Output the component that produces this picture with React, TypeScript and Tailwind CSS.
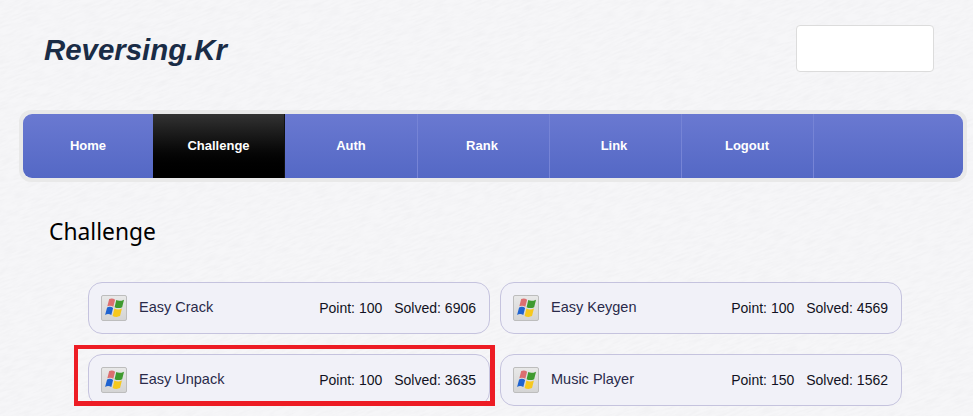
const cards = [
  { name: "Easy Crack", point: 100, solved: 6906 },
  { name: "Easy Keygen", point: 100, solved: 4569 },
  { name: "Easy Unpack", point: 100, solved: 3635 },
  { name: "Music Player", point: 150, solved: 1562 },
];
const nav = ["Home", "Challenge", "Auth", "Rank", "Link", "Logout"];

function WinIcon() {
  return (
    <div className="flex h-[26px] w-[26px] shrink-0 items-center justify-center rounded-[2px] border border-[#bdbdbd] bg-gradient-to-b from-[#e8e8e8] to-[#d4d4d4]">
      <svg width="21" height="20" viewBox="1 1.6 17 17">
        <path d="M5 2.5 C7 1.5 8.5 2 10 3 L8.5 9 C7 8 5 7.8 3.4 8.6 Z" fill="#dc6f70" />
        <path d="M11 3.4 C13 4.4 15 4.2 17.6 3 L16 9.4 C14 10.4 11.5 10.4 9.6 9.4 Z" fill="#3f9a2f" />
        <path d="M3.2 9.6 C5 8.8 7 9 8.3 10 L6.8 16 C5 15 3.2 15 1.5 16 Z" fill="#1f63d0" />
        <path d="M9.4 10.6 C11.5 11.6 13.8 11.6 15.8 10.6 L14.2 17 C12 18 9.8 17.8 7.9 16.8 Z" fill="#f6c81e" />
      </svg>
    </div>
  );
}

export default function App() {
  return (
    <div className="relative h-[416px] w-[973px] overflow-hidden bg-[#f6f6f8] font-['Liberation_Sans',sans-serif]">
      <svg className="absolute inset-0 h-full w-full" aria-hidden="true">
        <filter id="paper" x="-20%" y="-20%" width="140%" height="140%">
          <feTurbulence type="fractalNoise" baseFrequency="0.07 0.5" numOctaves="3" seed="4" />
          <feColorMatrix values="0 0 0 0 0.84  0 0 0 0 0.84  0 0 0 0 0.86  1.1 0 0 0 -0.4" />
        </filter>
        <rect x="-300" y="-400" width="1600" height="1200" filter="url(#paper)" transform="rotate(-20 480 200)" />
      </svg>
      <div className="relative flex h-full flex-col">
        <header className="flex h-[110px] items-start justify-between pl-[44px] pr-[39px]">
          <h1 className="mt-[30px] text-[29.4px] leading-[40px] font-bold italic text-[#1a2c46]">Reversing.Kr</h1>
          <div className="mt-[25px] h-[47px] w-[138px] rounded-[4px] border border-[#dcdcdc] bg-white" />
        </header>
        <nav className="ml-[19px] w-[948px] rounded-[12px] border-4 border-[#e9e9e9]">
          <ul className="flex h-[64px] overflow-hidden rounded-[9px] bg-gradient-to-b from-[#6a79d1] to-[#5468c5] text-[13px] font-bold text-white">
            <li className="flex w-[130px] items-center justify-center">Home</li>
            {nav.slice(1).map((item) => (
              <li
                key={item}
                className={
                  item === "Challenge"
                    ? "flex w-[132px] items-center justify-center border-r border-r-[#111111] bg-gradient-to-b from-[#333333] to-[#000000]"
                    : item === "Auth"
                      ? "flex w-[132px] items-center justify-center"
                      : item === "Logout"
                        ? "flex w-[132px] items-center justify-center border-l border-l-[#7684d6] pr-[1px]"
                        : "flex w-[132px] items-center justify-center border-l border-l-[#7684d6] pr-[3px]"
                }
              >
                {item}
              </li>
            ))}
            <li className="flex-1 border-l border-l-[#7684d6]" />
          </ul>
        </nav>
        <h2 className="mt-[34px] ml-[49px] font-['Noto_Sans',sans-serif] text-[22.8px] leading-[32px] text-black">Challenge</h2>
        <div className="mt-[34px] ml-[88px] grid w-[814px] grid-cols-2 gap-x-[10px] gap-y-[20px]">
          {cards.map((c) => (
            <div
              key={c.name}
              className="flex h-[52px] items-center rounded-[14px] border border-[#c5c3de] bg-[#f1f1f8] pr-[13px] pl-[12px] text-[14px] text-[#222222]"
            >
              <WinIcon />
              <span className="ml-[12px] text-[14.5px] text-[#2a2a4a]">{c.name}</span>
              <span className="ml-auto text-[#111122]">Point: {c.point}</span>
              <span className="ml-[12px] text-[#111122]">Solved: {c.solved}</span>
            </div>
          ))}
        </div>
      </div>
      <div className="absolute top-[345px] left-[74px] h-[61px] w-[421px] border-[4px] border-r-[5px] border-b-[5px] border-[#ed1c24]" />
    </div>
  );
}
